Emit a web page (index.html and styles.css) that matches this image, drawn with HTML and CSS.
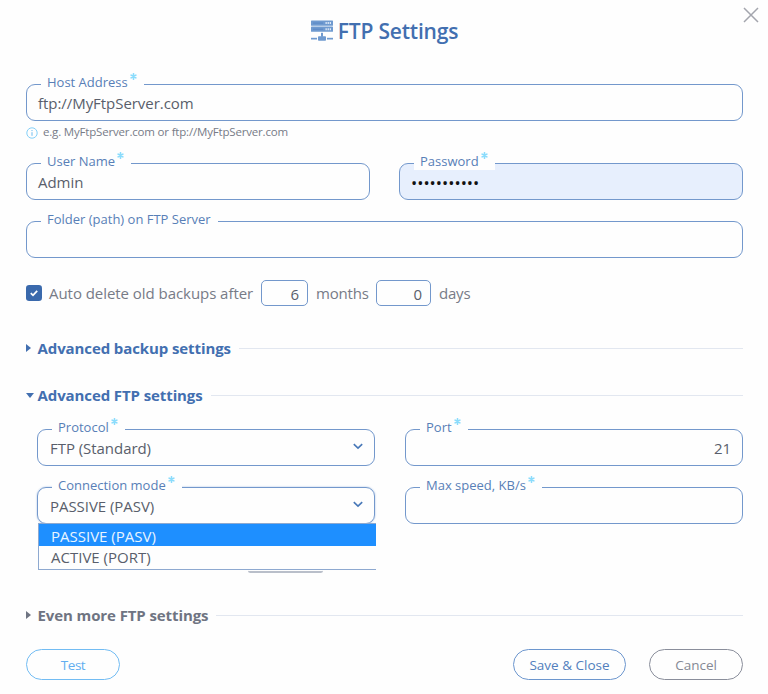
FILE: index.html
```html
<!DOCTYPE html>
<html lang="en">
<head>
<meta charset="utf-8">
<title>FTP Settings</title>
<link rel="stylesheet" href="styles.css">
</head>
<body>
<svg class="defs" width="0" height="0" aria-hidden="true">
  <symbol id="star" viewBox="0 0 8 8"><path d="M4 .9v6.2M1.3 2.4l5.4 3.2M6.7 2.4L1.3 5.6" stroke="#8bdcfc" stroke-width="1.9" stroke-linecap="round"/></symbol>
  <symbol id="chevron" viewBox="0 0 10 7"><path d="M.8 1.2L5 5.2l4.2-4" fill="none" stroke="#4878b8" stroke-width="1.6"/></symbol>
</svg>
<main class="dialog">
  <svg class="close" viewBox="0 0 16 16"><path d="M1 1l14 14M15 1L1 15" stroke="#a3a5ad" stroke-width="1.5"/></svg>
  <header class="title">
    <svg class="server" viewBox="0 0 22 22">
      <g fill="#6f9ad0"><rect width="22" height="5.4" y=".4" rx=".6"/><rect y="6.6" width="22" height="5.2" rx=".6"/><rect x="10" y="12.8" width="2" height="4"/><rect x="7" y="16.2" width="8" height="4.6" rx=".8"/><rect y="17.8" width="6" height="1.7"/><rect x="16" y="17.8" width="6" height="1.7"/></g>
      <path d="M2 3.1h10M2 9.2h10" stroke="#5583c2" stroke-width=".8"/>
      <path d="M14.5 3.1h6M14.5 9.2h6" stroke="#dce8f6" stroke-width="2" stroke-dasharray="1.3 .8"/>
    </svg>
    <h1>FTP Settings</h1>
  </header>

  <div class="field">
    <label class="host">Host Address<svg class="star"><use href="#star"/></svg></label>
    <span class="value url">ftp://MyFtpServer.com</span>
  </div>
  <p class="hint">
    <svg viewBox="0 0 12 12"><circle cx="6" cy="6" r="5.2" fill="none" stroke="#85d0f8"/><path d="M6 5.2v3.6M6 3v1.1" stroke="#6dbcf0"/></svg>
    <span>e.g. MyFtpServer.com or ftp://MyFtpServer.com</span>
  </p>
  <div class="row credentials">
    <div class="field">
      <label class="user">User Name<svg class="star"><use href="#star"/></svg></label>
      <span class="value admin">Admin</span>
    </div>
    <div class="field filled">
      <label class="password">Password<svg class="star"><use href="#star"/></svg></label>
      <span class="value dots">•••••••••••</span>
    </div>
  </div>
  <div class="field folder">
    <label class="path">Folder (path) on FTP Server</label>
  </div>
  <div class="retention">
    <svg class="check" viewBox="0 0 16 16"><rect width="16" height="16" rx="3.2" fill="#3a69ac"/><path d="M4.8 8.2l2.2 2.1 4.2-4.4" fill="none" stroke="#fff" stroke-width="1.8"/></svg>
    <span class="auto">Auto delete old backups after</span>
    <span class="number months">6</span>
    <span class="unit">months</span>
    <span class="number days">0</span>
    <span class="unit">days</span>
  </div>

  <h2 class="backup"><i class="caret"></i><span>Advanced backup settings</span></h2>
  <h2 class="ftp"><i class="caret open"></i><span>Advanced FTP settings</span></h2>
  <section class="advanced">
    <div class="row">
      <div class="field">
        <label class="protocol">Protocol<svg class="star"><use href="#star"/></svg></label>
        <span class="value standard">FTP (Standard)</span>
        <svg class="chevron"><use href="#chevron"/></svg>
      </div>
      <div class="field">
        <label class="port">Port<svg class="star"><use href="#star"/></svg></label>
        <span class="value right">21</span>
      </div>
    </div>
    <div class="row">
      <div class="field focused">
        <label class="mode">Connection mode<svg class="star"><use href="#star"/></svg></label>
        <span class="value passive">PASSIVE (PASV)</span>
        <svg class="chevron"><use href="#chevron"/></svg>
        <ul class="menu">
          <li class="selected"><span>PASSIVE (PASV)</span></li>
          <li><span>ACTIVE (PORT)</span></li>
        </ul>
      </div>
      <div class="field">
        <label class="speed">Max speed, KB/s<svg class="star"><use href="#star"/></svg></label>
      </div>
    </div>
  </section>
  <h2 class="more"><i class="caret"></i><span>Even more FTP settings</span></h2>

  <footer class="actions">
    <button class="test">Test</button>
    <button class="save">Save &amp; Close</button>
    <button class="cancel">Cancel</button>
  </footer>
</main>
</body>
</html>
```
FILE: styles.css
```css
* { box-sizing: border-box; }
body {
  margin: 0;
  background: #fefefe;
  color: #595e6b;
  font-family: "Open Sans", "Noto Sans", sans-serif;
  font-size: 15px;
}
.defs { position: absolute; }
.dialog {
  position: relative;
  display: flex;
  flex-direction: column;
  height: 694px;
  padding: 0 25px 0 26px;
}
.close { position: absolute; top: 7px; right: 9px; width: 16px; height: 16px; }
.title {
  display: flex;
  align-items: center;
  justify-content: center;
  gap: 5px;
  height: 62px;
  margin-bottom: 22px;
}
.server { width: 22px; height: 22px; }
h1 { margin: 0; font-size: 21px; font-weight: 600; color: #426fb0; letter-spacing: -0.2px; line-height: 30px; }
.field {
  position: relative;
  display: flex;
  align-items: center;
  height: 37px;
  padding: 1px 11px 0;
  border: 1px solid #7398cc;
  border-radius: 9px;
  white-space: nowrap;
}
.filled { background: #e7effd; }
.focused { box-shadow: 0 0 2px #9cb8df; }
.value { letter-spacing: -0.05px; }
.field label {
  position: absolute;
  top: -13px;
  left: 14px;
  height: 19px;
  padding: 0 16px 0 6px;
  background: #fefefe;
  color: #587fb7;
  font-size: 13px;
  line-height: 20px;
}
.field .path { padding-right: 7px; }
.star { position: absolute; top: 1px; right: 7px; width: 7px; height: 7px; }
.right { margin-left: auto; }
.dots { color: #111; font-size: 16.5px; letter-spacing: 0; }
.chevron { width: 10px; height: 7px; margin: -3px 0 0 auto; }
.hint {
  display: flex;
  align-items: center;
  gap: 5px;
  height: 24px;
  margin: 0 0 18px;
  color: #777b87;
  font-size: 11.5px;
  letter-spacing: -0.18px;
  line-height: 14px;
  white-space: nowrap;
}
.hint svg { width: 12px; height: 12px; }
.hint span { margin-top: -2px; }
.row { display: grid; grid-template-columns: 338px 338px; gap: 30px; }
.credentials { grid-template-columns: 344px 344px; gap: 29px; }
.folder { margin-top: 21px; }
.retention {
  display: flex;
  align-items: center;
  height: 26px;
  margin-top: 22px;
  color: #777b87;
  white-space: nowrap;
}
.check { width: 16px; height: 16px; margin-right: 7px; }
.auto { width: 212px; letter-spacing: -0.05px; }
.number {
  height: 26px;
  padding-right: 8px;
  border: 1px solid #7398cc;
  border-radius: 5px;
  color: #595e6b;
  line-height: 26px;
  text-align: right;
}
.months { width: 47px; margin-right: 8px; }
.retention .unit { letter-spacing: -0.2px; }
.days { width: 55px; margin-right: 8px; }
.retention .unit:nth-of-type(3) { width: 60px; }
h2 {
  display: flex;
  align-items: center;
  height: 24px;
  margin: 0;
  color: #426fb0;
  font-size: 15px;
  font-weight: 700;
  letter-spacing: -0.1px;
  line-height: 20px;
  white-space: nowrap;
}
h2 span { margin-top: -1px; }
h2::after { content: ""; flex: 1; height: 1px; margin-left: 8px; background: #e2e7f0; }
.backup { margin-top: 30px; }
.ftp { margin-top: 23px; }
.more { margin-top: 79px; color: #6f7482; }
.caret { width: 11.5px; flex: none; }
.caret::before {
  content: "";
  display: block;
  width: 0;
  border-left: 5px solid currentColor;
  border-top: 4.5px solid transparent;
  border-bottom: 4.5px solid transparent;
}
.open::before {
  border-top: 5px solid currentColor;
  border-bottom: 0;
  border-left: 4.5px solid transparent;
  border-right: 4.5px solid transparent;
}
.advanced { display: grid; gap: 21px; padding-left: 11px; margin-top: 22px; }
.advanced .field { padding-left: 12px; }
.menu {
  position: absolute;
  top: 35px;
  left: 0;
  width: 338px;
  height: 47px;
  margin: 0;
  padding: 0;
  border: 1px solid #8ea9d0;
  border-width: 1px 0 1px 1px;
  background: #fefefe;
  list-style: none;
}
.menu::after {
  content: "";
  position: absolute;
  left: 209px;
  top: 44px;
  width: 75px;
  height: 3px;
  border-bottom: 2px solid #b9bfca;
  border-radius: 3px;
}
.menu li { height: 22px; padding-left: 12px; line-height: 23px; }
.menu .selected { background: #1e8fff; color: #e9f5ff; line-height: 24px; }
.actions { display: flex; gap: 23px; margin-top: 22px; }
button {
  width: 94px;
  height: 31px;
  padding: 1px 0 0;
  border: 1px solid #8a8e9b;
  border-radius: 16px;
  background: #fefefe;
  color: #858995;
  font: 13.5px "Open Sans", "Noto Sans", sans-serif;
}
.test { margin-right: auto; border-color: #72bcf3; color: #62aef0; letter-spacing: -0.5px; }
.save { width: 113px; border-color: #6c96ce; color: #527fbd; }
```
